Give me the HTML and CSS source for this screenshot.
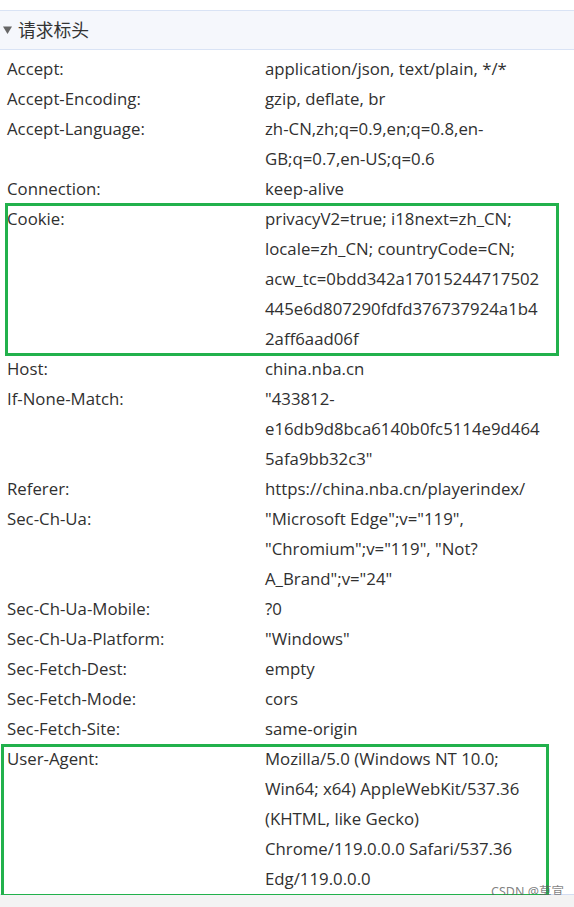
FILE: index.html
```html
<!DOCTYPE html>
<html lang="zh-CN">
<head>
<meta charset="utf-8">
<title>请求标头</title>
<link rel="stylesheet" href="styles.css">
</head>
<body>
<div class="page">
  <div class="section-head">
    <svg class="caret" width="9" height="8" viewBox="0 0 9 8"><polygon points="0,0.5 9,0.5 4.5,8" fill="#666666"/></svg>
    <span class="head-title">请求标头</span>
  </div>
  <div class="headers">
    <div class="name">Accept:</div><div class="value">application/json, text/plain, */*</div>
    <div class="name">Accept-Encoding:</div><div class="value">gzip, deflate, br</div>
    <div class="name">Accept-Language:</div><div class="value">zh-CN,zh;q=0.9,en;q=0.8,en-<br>GB;q=0.7,en-US;q=0.6</div>
    <div class="name">Connection:</div><div class="value">keep-alive</div>
    <div class="name">Cookie:</div><div class="value">privacyV2=true; i18next=zh_CN;<br>locale=zh_CN; countryCode=CN;<br>acw_tc=0bdd342a17015244717502<br>445e6d807290fdfd376737924a1b4<br>2aff6aad06f</div>
    <div class="name">Host:</div><div class="value">china.nba.cn</div>
    <div class="name">If-None-Match:</div><div class="value">"433812-<br>e16db9d8bca6140b0fc5114e9d464<br>5afa9bb32c3"</div>
    <div class="name">Referer:</div><div class="value">https://china.nba.cn/playerindex/</div>
    <div class="name">Sec-Ch-Ua:</div><div class="value">"Microsoft Edge";v="119",<br>"Chromium";v="119", "Not?<br>A_Brand";v="24"</div>
    <div class="name">Sec-Ch-Ua-Mobile:</div><div class="value">?0</div>
    <div class="name">Sec-Ch-Ua-Platform:</div><div class="value">"Windows"</div>
    <div class="name">Sec-Fetch-Dest:</div><div class="value">empty</div>
    <div class="name">Sec-Fetch-Mode:</div><div class="value">cors</div>
    <div class="name">Sec-Fetch-Site:</div><div class="value">same-origin</div>
    <div class="name">User-Agent:</div><div class="value">Mozilla/5.0 (Windows NT 10.0;<br>Win64; x64) AppleWebKit/537.36<br>(KHTML, like Gecko)<br>Chrome/119.0.0.0 Safari/537.36<br>Edg/119.0.0.0</div>
  </div>
  <div class="mark mark-cookie"></div>
  <div class="mark mark-ua"></div>
  <div class="watermark">CSDN @草宣</div>
</div>
</body>
</html>
```

FILE: styles.css
```css
html, body {
  margin: 0;
  padding: 0;
  background: #f3f3f3;
}
.page {
  position: relative;
  width: 574px;
  background: #ffffff;
  padding-top: 10px;
  border-bottom: 1px solid #d3ddf2;
  font-family: "Open Sans", "Noto Sans CJK SC", sans-serif;
  color: #303030;
}
.section-head {
  height: 38px;
  display: flex;
  align-items: center;
  background: #f5f7fc;
  border-top: 1px solid #d9e3f5;
  border-bottom: 1px solid #d9e3f5;
  padding-left: 3px;
}
.caret {
  margin-right: 6px;
  margin-top: -1px;
}
.head-title {
  font-family: "Noto Sans CJK SC", sans-serif;
  font-size: 17.8px;
  line-height: 24px;
  margin-top: -3px;
  color: #333333;
}
.headers {
  display: grid;
  grid-template-columns: 258px 1fr;
  padding: 4px 0 0 7px;
  font-size: 16.8px;
  line-height: 30px;
}
.value {
  white-space: nowrap;
}
.mark {
  position: absolute;
  border: 3px solid #22b14c;
  box-sizing: border-box;
}
.mark-cookie {
  left: 5px;
  top: 203px;
  width: 554px;
  height: 153px;
}
.mark-ua {
  left: 1px;
  top: 744px;
  width: 548px;
  height: 153px;
}
.watermark {
  position: absolute;
  left: 491px;
  top: 881px;
  font-family: "Noto Sans", "Noto Sans CJK SC", sans-serif;
  font-size: 12.5px;
  color: rgba(95, 95, 95, 0.8);
}
```
